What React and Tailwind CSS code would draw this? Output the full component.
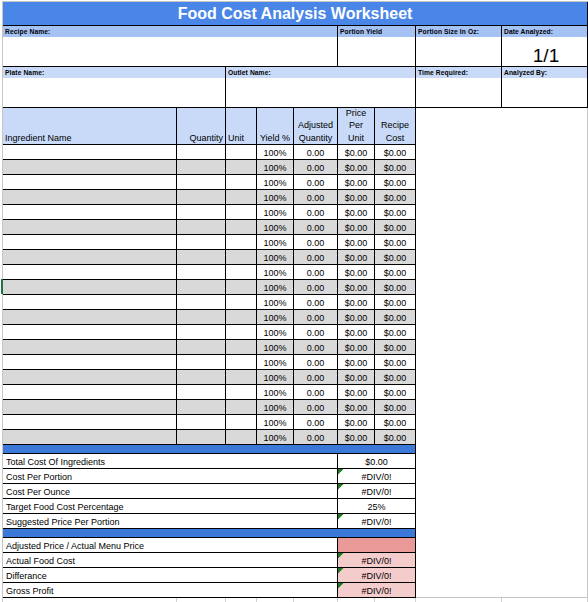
import React from "react";

const font = "font-['Liberation_Sans',Arial,sans-serif]";

function Tri() {
  return (
    <svg className="absolute left-0 top-0" width="6" height="6" viewBox="0 0 6 6">
      <polygon points="0,0 5.5,0 0,5.5" fill="#1d7a1d" />
    </svg>
  );
}

const colW = ["w-[174px]", "w-[49px]", "w-[31px]", "w-[37px]", "w-[44px]", "w-[37px]", "w-[41px]"];

function DataRow({ gray }) {
  const bg = gray ? "bg-[#d9d9d9]" : "bg-white";
  return (
    <div className={`flex h-[15px] border-b border-black text-[9px] leading-[13px] ${bg}`}>
      <div className="w-[174px] border-r border-black" />
      <div className="w-[49px] border-r border-black" />
      <div className="w-[31px] border-r border-black" />
      <div className="w-[37px] border-r border-black text-center pt-[1.5px]">100%</div>
      <div className="w-[44px] border-r border-black text-center pt-[1.5px]">0.00</div>
      <div className="w-[37px] border-r border-black text-center pt-[1.5px]">$0.00</div>
      <div className="w-[41px] border-r border-black text-center pt-[1.5px]">$0.00</div>
    </div>
  );
}

function SumRow({ label, value, tri, bg = "bg-white" }) {
  return (
    <div className="flex h-[15px] border-b border-black text-[9px] leading-[13px]">
      <div className="w-[335px] border-r border-black pl-[3px] pt-[1.5px]">{label}</div>
      <div className={`relative w-[78px] border-r border-black text-center pt-[1.5px] ${bg}`}>
        {tri && <Tri />}
        {value}
      </div>
    </div>
  );
}

function Sep() {
  return <div className="h-[9px] border-b border-r border-black bg-[#3c78d8]" />;
}

export default function App() {
  const rows = Array.from({ length: 20 }, (_, i) => i);
  return (
    <div className={`relative w-[588px] h-[602px] bg-white overflow-hidden text-black ${font}`}>
      <div className="pt-[1px]">
        <div className="ml-[2px] w-[586px] h-[601px] border-l border-t border-[#c6c6c6]">
          {/* Title */}
          <div className="h-[24px] border-b border-r border-black bg-[#4a86e8] text-white font-bold text-[16px] leading-[23px] text-center">
            Food Cost Analysis Worksheet
          </div>
          {/* Row 2 */}
          <div className="flex h-[41px] border-b border-black">
            {[
              ["w-[335px]", "Recipe Name:"],
              ["w-[78px]", "Portion Yield"],
              ["w-[86px]", "Portion Size In Oz:"],
              ["w-[86px]", "Date Analyzed:"],
            ].map(([w, l], i) => (
              <div key={i} className={`${w} border-r border-black flex flex-col`}>
                <div className="h-[11px] bg-[#a4c2f4] text-[6.7px] font-bold leading-[11px] pl-[2px] whitespace-nowrap tracking-[0.1px]">{l}</div>
                <div className="flex-1 flex items-end justify-center text-[19px] leading-[19px] pl-[3px] pb-[1px]">
                  {i === 3 ? "1/1" : ""}
                </div>
              </div>
            ))}
          </div>
          {/* Row 3 */}
          <div className="flex h-[41px] border-b border-black">
            {[
              ["w-[223px]", "Plate Name:"],
              ["w-[190px]", "Outlet Name:"],
              ["w-[86px]", "Time Required:"],
              ["w-[86px]", "Analyzed By:"],
            ].map(([w, l], i) => (
              <div key={i} className={`${w} border-r border-black flex flex-col`}>
                <div className="h-[11px] bg-[#c9daf8] text-[6.7px] font-bold leading-[11px] pl-[2px] whitespace-nowrap tracking-[0.1px]">{l}</div>
                <div className="flex-1" />
              </div>
            ))}
          </div>
          {/* Middle */}
          <div className="flex">
            <div className="w-[413px] flex flex-col">
              <div className="flex h-[37px] border-b border-black bg-[#c9daf8] text-[9px] leading-[12.5px]">
                <div className="w-[174px] border-r border-black flex items-end pl-[2px]">Ingredient Name</div>
                <div className="w-[49px] border-r border-black flex items-end justify-end pr-[2px]">Quantity</div>
                <div className="w-[31px] border-r border-black flex items-end pl-[2px]">Unit</div>
                <div className="w-[37px] border-r border-black flex items-end justify-center">Yield %</div>
                <div className="w-[44px] border-r border-black flex items-end justify-center text-center">Adjusted<br />Quantity</div>
                <div className="w-[37px] border-r border-black flex items-end justify-center text-center">Price<br />Per<br />Unit</div>
                <div className="w-[41px] border-r border-black flex items-end justify-center text-center">Recipe<br />Cost</div>
              </div>
              {rows.map((i) => (
                <DataRow key={i} gray={i % 2 === 1} />
              ))}
              <Sep />
              <SumRow label="Total Cost Of Ingredients" value="$0.00" />
              <SumRow label="Cost Per Portion" value="#DIV/0!" tri />
              <SumRow label="Cost Per Ounce" value="#DIV/0!" tri />
              <SumRow label="Target Food Cost Percentage" value="25%" />
              <SumRow label="Suggested Price Per Portion" value="#DIV/0!" tri />
              <Sep />
              <SumRow label="Adjusted Price / Actual Menu Price" value="" bg="bg-[#ea9999]" />
              <SumRow label="Actual Food Cost" value="#DIV/0!" tri bg="bg-[#f4cccc]" />
              <SumRow label="Differance" value="#DIV/0!" tri bg="bg-[#f4cccc]" />
              <SumRow label="Gross Profit" value="#DIV/0!" tri bg="bg-[#f4cccc]" />
            </div>
            <div className="w-[172px] h-[490px] border-r border-b border-[#c6c6c6]" />
          </div>
          {/* grid ticks */}
          <div className="flex h-[6px]">
            {colW.map((w, i) => (
              <div key={i} className={`${w} border-r border-[#d0d0d0]`} />
            ))}
            <div className="w-[86px] border-r border-[#d0d0d0]" />
            <div className="w-[86px] border-r border-[#d0d0d0]" />
          </div>
        </div>
      </div>
      <div className="absolute left-[1px] top-[279px] w-[2px] h-[15px] bg-[#217346]" />
    </div>
  );
}
